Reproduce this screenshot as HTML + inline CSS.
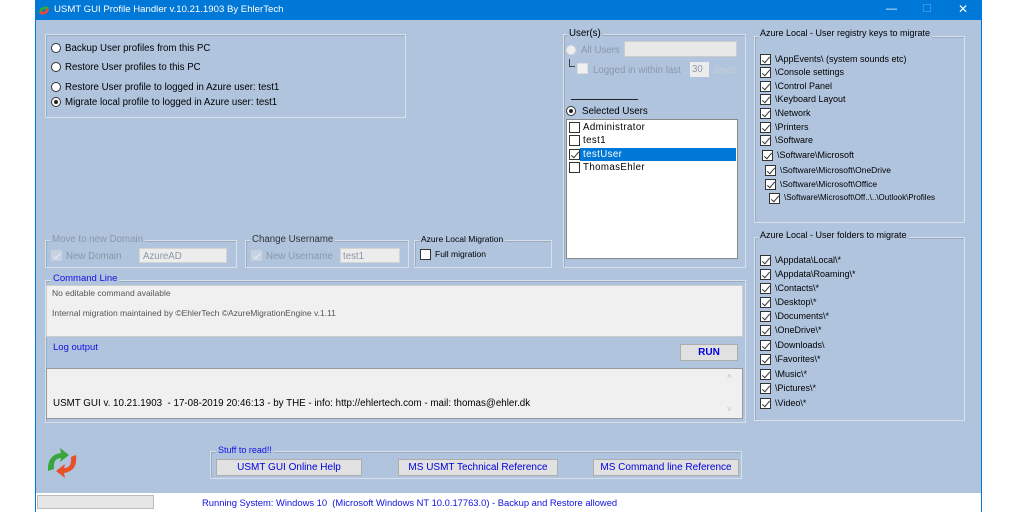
<!DOCTYPE html>
<html><head><style>
*{margin:0;padding:0;box-sizing:border-box}
body{width:1024px;height:512px;background:#fff;position:relative;overflow:hidden;font-family:"Liberation Sans",sans-serif;font-size:9px;color:#000}
.a{position:absolute;white-space:nowrap}
.g{position:absolute;border:1px solid #d8e0ea;box-shadow:inset 1px 1px 0 #9aaabf}
.lab{position:absolute;background:#b0c4de;padding:0 2px;white-space:nowrap;line-height:11px}
.rad{position:absolute;width:10px;height:10px;border:1px solid #333;border-radius:50%;background:#fff}
.rad.on::after{content:"";position:absolute;left:2px;top:2px;width:4px;height:4px;border-radius:50%;background:#222}
.cb{position:absolute;width:11px;height:11px;border:1px solid #333;background:#fff}
.cb.on::after{content:"";position:absolute;left:3px;top:0px;width:3px;height:7px;border:solid #333;border-width:0 1px 1px 0;transform:rotate(40deg)}
.cb.dc{border-color:#c8d0da;background:#c4d2e4}
.cb.dc::after{border-color:#e8eef6}
.btn{position:absolute;background:#e1e1e1;border:1px solid #adadad;color:#0000e0;text-align:center;font-size:10px;line-height:15px}
.blue{color:#1010e0}
.dis{color:#8c97a8}
.l{font-size:9.7px}
</style></head><body>
<div class="a" style="left:35px;top:0;width:947px;height:20px;background:#0078d7"></div>
<div class="a" style="left:35px;top:20px;width:947px;height:473px;background:#b0c4de;border-left:1px solid #0078d7;border-right:1px solid #0078d7"></div>
<div class="a" style="left:35px;top:493px;width:947px;height:19px;background:#fff;border-left:1px solid #0078d7;border-right:1px solid #0078d7"></div>
<svg class="a" style="left:38px;top:4px" width="12" height="12"><path d="M1 8 Q2 2 8 3 L7 1 L11 4 L7 7 L8 5 Q4 5 3 9Z" fill="#3a3"/><path d="M11 5 Q10 11 4 10 L5 12 L1 9 L5 6 L4 8 Q8 8 9 4Z" fill="#e43"/></svg>
<div class="a" style="left:54px;top:4px;color:#fff;font-size:9.6px">USMT GUI Profile Handler v.10.21.1903 By EhlerTech</div>
<div class="a" style="left:886px;top:3px;color:#fff;font-size:11px">—</div>
<div class="a" style="left:922px;top:2px;color:#5aa0e6;font-size:11px">☐</div>
<div class="a" style="left:958px;top:2px;color:#fff;font-size:12px">✕</div>

<div class="g" style="left:45px;top:34px;width:361px;height:84px"></div>
<div class="rad" style="left:51px;top:43px"></div><div class="a l" style="left:65px;top:43px">Backup User profiles from this PC</div>
<div class="rad" style="left:51px;top:62px"></div><div class="a l" style="left:65px;top:62px">Restore User profiles to this PC</div>
<div class="rad" style="left:51px;top:82px"></div><div class="a l" style="left:65px;top:82px">Restore User profile to logged in Azure user: test1</div>
<div class="rad on" style="left:51px;top:97px"></div><div class="a l" style="left:65px;top:97px">Migrate local profile to logged in Azure user: test1</div>

<div class="g" style="left:563px;top:34px;width:183px;height:234px"></div>
<div class="lab l" style="left:567px;top:28px">User(s)</div>
<div class="rad" style="left:566px;top:45px;border-color:#ddd;background:#eee"></div><div class="a dis l" style="left:581px;top:45px">All Users</div>
<div class="a" style="left:624px;top:41px;width:113px;height:16px;background:#e8e8e8;border:1px solid #ccc"></div>
<div class="a" style="left:569px;top:59px;width:6px;height:8px;border-left:1px solid #444;border-bottom:1px solid #444"></div>
<div class="cb" style="left:577px;top:63px;border-color:#ddd;background:#f0f0f0"></div><div class="a dis l" style="left:593px;top:65px">Logged in within last</div>
<div class="a dis l" style="left:690px;top:62px;width:19px;height:15px;background:#ececec;padding:2px 2px">30</div><div class="a l" style="left:713px;top:65px;color:#c8ced6">days!</div>
<div class="a" style="left:571px;top:99px;width:67px;height:1px;background:#222"></div>
<div class="rad on" style="left:566px;top:106px"></div><div class="a l" style="left:582px;top:106px">Selected Users</div>
<div class="a" style="left:566px;top:119px;width:172px;height:140px;background:#fff;border:1px solid #888"></div>
<div class="cb" style="left:569px;top:122px"></div><div class="a l" style="left:583px;top:122px;letter-spacing:0.4px">Administrator</div>
<div class="cb" style="left:569px;top:135px"></div><div class="a l" style="left:583px;top:135px;letter-spacing:0.4px">test1</div>
<div class="a" style="left:580px;top:148px;width:156px;height:13px;background:#0078d7"></div>
<div class="cb on" style="left:569px;top:149px"></div><div class="a l" style="left:583px;top:149px;color:#fff;letter-spacing:0.4px">testUser</div>
<div class="cb" style="left:569px;top:162px"></div><div class="a l" style="left:583px;top:162px;letter-spacing:0.4px">ThomasEhler</div>

<div class="g" style="left:754px;top:36px;width:211px;height:187px"></div>
<div class="lab" style="left:758px;top:28px">Azure Local - User registry keys to migrate</div>
<div class="cb on" style="left:760px;top:54px"></div><div class="a" style="left:775px;top:54px">\AppEvents\ (system sounds etc)</div>
<div class="cb on" style="left:760px;top:67px"></div><div class="a" style="left:775px;top:67px">\Console settings</div>
<div class="cb on" style="left:760px;top:81px"></div><div class="a" style="left:775px;top:81px">\Control Panel</div>
<div class="cb on" style="left:760px;top:94px"></div><div class="a" style="left:775px;top:94px">\Keyboard Layout</div>
<div class="cb on" style="left:760px;top:108px"></div><div class="a" style="left:775px;top:108px">\Network</div>
<div class="cb on" style="left:760px;top:122px"></div><div class="a" style="left:775px;top:122px">\Printers</div>
<div class="cb on" style="left:760px;top:135px"></div><div class="a" style="left:775px;top:135px">\Software</div>
<div class="cb on" style="left:762px;top:150px"></div><div class="a" style="left:777px;top:150px">\Software\Microsoft</div>
<div class="cb on" style="left:765px;top:165px"></div><div class="a" style="left:780px;top:165px;font-size:8.5px">\Software\Microsoft\OneDrive</div>
<div class="cb on" style="left:765px;top:179px"></div><div class="a" style="left:780px;top:179px;font-size:8.5px">\Software\Microsoft\Office</div>
<div class="cb on" style="left:769px;top:193px"></div><div class="a" style="left:784px;top:193px;font-size:8px">\Software\Microsoft\Off..\..\Outlook\Profiles</div>

<div class="g" style="left:754px;top:237px;width:211px;height:184px"></div>
<div class="lab" style="left:758px;top:230px">Azure Local - User folders to migrate</div>
<div class="cb on" style="left:760px;top:255px"></div><div class="a" style="left:775px;top:255px">\Appdata\Local\*</div>
<div class="cb on" style="left:760px;top:269px"></div><div class="a" style="left:775px;top:269px">\Appdata\Roaming\*</div>
<div class="cb on" style="left:760px;top:283px"></div><div class="a" style="left:775px;top:283px">\Contacts\*</div>
<div class="cb on" style="left:760px;top:297px"></div><div class="a" style="left:775px;top:297px">\Desktop\*</div>
<div class="cb on" style="left:760px;top:311px"></div><div class="a" style="left:775px;top:311px">\Documents\*</div>
<div class="cb on" style="left:760px;top:325px"></div><div class="a" style="left:775px;top:325px">\OneDrive\*</div>
<div class="cb on" style="left:760px;top:340px"></div><div class="a" style="left:775px;top:340px">\Downloads\</div>
<div class="cb on" style="left:760px;top:354px"></div><div class="a" style="left:775px;top:354px">\Favorites\*</div>
<div class="cb on" style="left:760px;top:369px"></div><div class="a" style="left:775px;top:369px">\Music\*</div>
<div class="cb on" style="left:760px;top:383px"></div><div class="a" style="left:775px;top:383px">\Pictures\*</div>
<div class="cb on" style="left:760px;top:398px"></div><div class="a" style="left:775px;top:398px">\Video\*</div>

<div class="g" style="left:45px;top:240px;width:192px;height:28px"></div>
<div class="lab dis l" style="left:50px;top:234px">Move to new Domain</div>
<div class="cb on dc" style="left:51px;top:250px"></div><div class="a dis l" style="left:66px;top:251px">New Domain</div>
<div class="a dis l" style="left:139px;top:248px;width:88px;height:15px;background:#ececec;border:1px solid #d4d4d4;padding:2px 3px">AzureAD</div>
<div class="g" style="left:245px;top:240px;width:164px;height:28px"></div>
<div class="lab l" style="left:250px;top:234px;color:#333">Change Username</div>
<div class="cb on dc" style="left:251px;top:250px"></div><div class="a dis l" style="left:266px;top:251px">New Username</div>
<div class="a dis l" style="left:340px;top:248px;width:60px;height:15px;background:#ececec;border:1px solid #d4d4d4;padding:2px 2px">test1</div>
<div class="g" style="left:414px;top:240px;width:138px;height:28px"></div>
<div class="lab" style="left:419px;top:234px;font-size:8.5px">Azure Local Migration</div>
<div class="cb" style="left:420px;top:249px"></div><div class="a" style="left:435px;top:249px;font-size:8.5px">Full migration</div>

<div class="g" style="left:45px;top:280px;width:701px;height:143px"></div>
<div class="lab blue" style="left:51px;top:273px;font-size:9.5px">Command Line</div>
<div class="a" style="left:46px;top:285px;width:697px;height:52px;background:#f0f0f0;border:1px solid #ccc;color:#555;font-size:8.5px;padding:2px 5px;line-height:10px">No editable command available<br><br>Internal migration maintained by ©EhlerTech ©AzureMigrationEngine v.1.11</div>
<div class="a blue" style="left:53px;top:342px;font-size:9.5px">Log output</div>
<div class="btn" style="left:680px;top:344px;width:58px;height:17px;font-weight:bold">RUN</div>
<div class="a" style="left:46px;top:368px;width:697px;height:51px;background:#f0f0f0;border:1px solid #999;padding:29px 6px 0;font-size:9.8px">USMT GUI v. 10.21.1903&nbsp; - 17-08-2019 20:46:13 - by THE - info: http://ehlertech.com - mail: thomas@ehler.dk</div>
<div class="a" style="left:727px;top:372px;color:#bbb;font-size:8px">˄</div>
<div class="a" style="left:727px;top:405px;color:#bbb;font-size:8px">˅</div>

<svg class="a" style="left:45px;top:445px" width="34" height="34"><path d="M3 26 Q2 10 16 8 L15 3 L24 10 L15 17 L16 13 Q8 13 9 24Z" fill="#3aa53a"/><path d="M31 10 Q33 26 19 28 L20 33 L11 26 L20 19 L19 23 Q27 23 26 12Z" fill="#e8502a"/></svg>

<div class="g" style="left:210px;top:451px;width:532px;height:28px"></div>
<div class="lab blue" style="left:216px;top:445px">Stuff to read!!</div>
<div class="btn" style="left:216px;top:459px;width:146px;height:17px">USMT GUI Online Help</div>
<div class="btn" style="left:398px;top:459px;width:160px;height:17px">MS USMT Technical Reference</div>
<div class="btn" style="left:593px;top:459px;width:146px;height:17px">MS Command line Reference</div>

<div class="a" style="left:37px;top:495px;width:117px;height:14px;background:#e6e6e6;border:1px solid #bcbcbc"></div>
<div class="a blue" style="left:202px;top:497px;font-size:9.4px">Running System: Windows 10&nbsp; (Microsoft Windows NT 10.0.17763.0) - Backup and Restore allowed</div>
</body></html>
